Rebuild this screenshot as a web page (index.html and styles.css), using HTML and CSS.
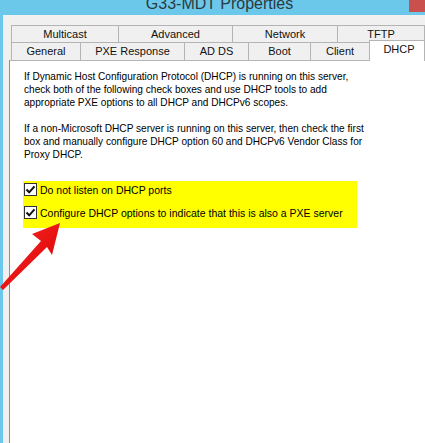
FILE: index.html
```html
<!DOCTYPE html>
<html lang="en">
<head>
<meta charset="UTF-8">
<title>G33-MDT Properties</title>
<link rel="stylesheet" href="styles.css">
</head>
<body>
<div class="window">
  <!-- Title bar -->
  <div class="titlebar">
    <span class="title">G33-MDT Properties</span>
    <span class="close-btn"></span>
  </div>

  <div class="dialog">
    <!-- Tabs -->
    <div class="tabs">
      <div class="tab-row back-row">
        <div class="tab t-multicast">Multicast</div>
        <div class="tab t-advanced">Advanced</div>
        <div class="tab t-network">Network</div>
        <div class="tab t-tftp">TFTP</div>
      </div>
      <div class="tab-row front-row">
        <div class="tab t-general">General</div>
        <div class="tab t-pxe">PXE Response</div>
        <div class="tab t-adds">AD DS</div>
        <div class="tab t-boot">Boot</div>
        <div class="tab t-client">Client</div>
        <div class="tab active t-dhcp">DHCP</div>
      </div>
    </div>

    <!-- Panel -->
    <div class="panel">
      <p class="desc">If Dynamic Host Configuration Protocol (DHCP) is running on this server,<br>check both of the following check boxes and use DHCP tools to add<br>appropriate PXE options to all DHCP and DHCPv6 scopes.</p>
      <p class="desc">If a non-Microsoft DHCP server is running on this server, then check the first<br>box and manually configure DHCP option 60 and DHCPv6 Vendor Class for<br>Proxy DHCP.</p>

      <div class="highlight">
        <label class="check-row">
          <span class="checkbox">
            <svg width="11" height="11" viewBox="0 0 11 11"><path d="M1.5 5.5 L4.2 8.3 L9.5 2.3" fill="none" stroke="#111" stroke-width="2"/></svg>
          </span>
          Do not listen on DHCP ports
        </label>
        <label class="check-row">
          <span class="checkbox">
            <svg width="11" height="11" viewBox="0 0 11 11"><path d="M1.5 5.5 L4.2 8.3 L9.5 2.3" fill="none" stroke="#111" stroke-width="2"/></svg>
          </span>
          Configure DHCP options to indicate that this is also a PXE server
        </label>
      </div>
    </div>
  </div>

  <!-- annotation arrow -->
  <svg class="arrow" width="70" height="80" viewBox="0 0 70 80">
    <defs>
      <linearGradient id="ag" x1="0" y1="0" x2="1" y2="1">
        <stop offset="0" stop-color="#ff2a2a"/>
        <stop offset="1" stop-color="#d40000"/>
      </linearGradient>
    </defs>
    <polygon points="60,2 32,13 41,20 0,66 3,69 47,26 52,34" fill="url(#ag)"/>
  </svg>
</div>
</body>
</html>
```

FILE: styles.css
```css
* {
  box-sizing: border-box;
}

body {
  margin: 0;
  width: 425px;
  height: 443px;
  overflow: hidden;
  background: #f0f0f0;
  font-family: "Liberation Sans", Arial, sans-serif;
  font-size: 11px;
  color: #000;
}

.window {
  position: relative;
  height: 443px;
  border-left: 3px solid #6cc8ea;
  display: flex;
  flex-direction: column;
}

/* Title bar */
.titlebar {
  height: 15px;
  background: #6cc8ea;
  position: relative;
  overflow: hidden;
  display: flex;
  justify-content: center;
  margin-left: -3px;
}

.title {
  font-size: 16px;
  line-height: 16px;
  margin-top: -4px;
  margin-left: 14px;
  color: #2b3a42;
}

.close-btn {
  position: absolute;
  right: 0;
  top: 0;
  width: 16px;
  height: 12px;
  background: #c9504c;
}

/* Dialog body */
.dialog {
  flex: 1;
  display: flex;
  flex-direction: column;
  padding: 10px 0 0 6px;
}

.tabs {
  padding-left: 2px;
}

.tab-row {
  display: flex;
  height: 18px;
}

.tab {
  background: #f0f0f0;
  border: 1px solid #b4b4b4;
  border-bottom: none;
  margin-left: -1px;
  text-align: center;
  line-height: 16px;
  color: #111;
  white-space: nowrap;
}

.back-row {
  height: 17px;
}

.t-multicast { width: 108px; margin-left: 0; }
.t-advanced  { width: 115px; }
.t-network   { width: 106px; }
.t-tftp      { flex: 1; }

.t-general { width: 70px; margin-left: 0; }
.t-pxe     { width: 105px; }
.t-adds    { width: 65px; }
.t-boot    { width: 63px; }
.t-client  { width: 60px; }

.tab.active {
  flex: 1;
  background: #fff;
  position: relative;
  margin-top: -2px;
  height: 21px;
  line-height: 17px;
  z-index: 1;
  padding-left: 4px;
}

/* Panel */
.panel {
  flex: 1;
  background: #fff;
  border-left: 1px solid #8a8d92;
  border-top: 1px solid #b4b4b4;
  padding: 9px 0 0 14px;
}

.desc {
  margin: 0 0 13px;
  line-height: 13px;
  font-size: 10.1px;
  white-space: nowrap;
}

.highlight {
  margin-top: 20px;
  margin-left: -1px;
  width: 334px;
  height: 47px;
  background: #ffff00;
  padding: 2px 0 0 1px;
  display: flex;
  flex-direction: column;
  gap: 10px;
}

.check-row {
  display: flex;
  align-items: center;
  gap: 3px;
  height: 13px;
  font-size: 10.5px;
  white-space: nowrap;
}

.checkbox {
  width: 13px;
  height: 13px;
  border: 1px solid #333;
  background: #fff;
  display: flex;
  align-items: center;
  justify-content: center;
  flex: none;
}

/* annotation arrow */
.arrow {
  position: absolute;
  left: -3px;
  top: 221px;
  z-index: 2;
}
```
